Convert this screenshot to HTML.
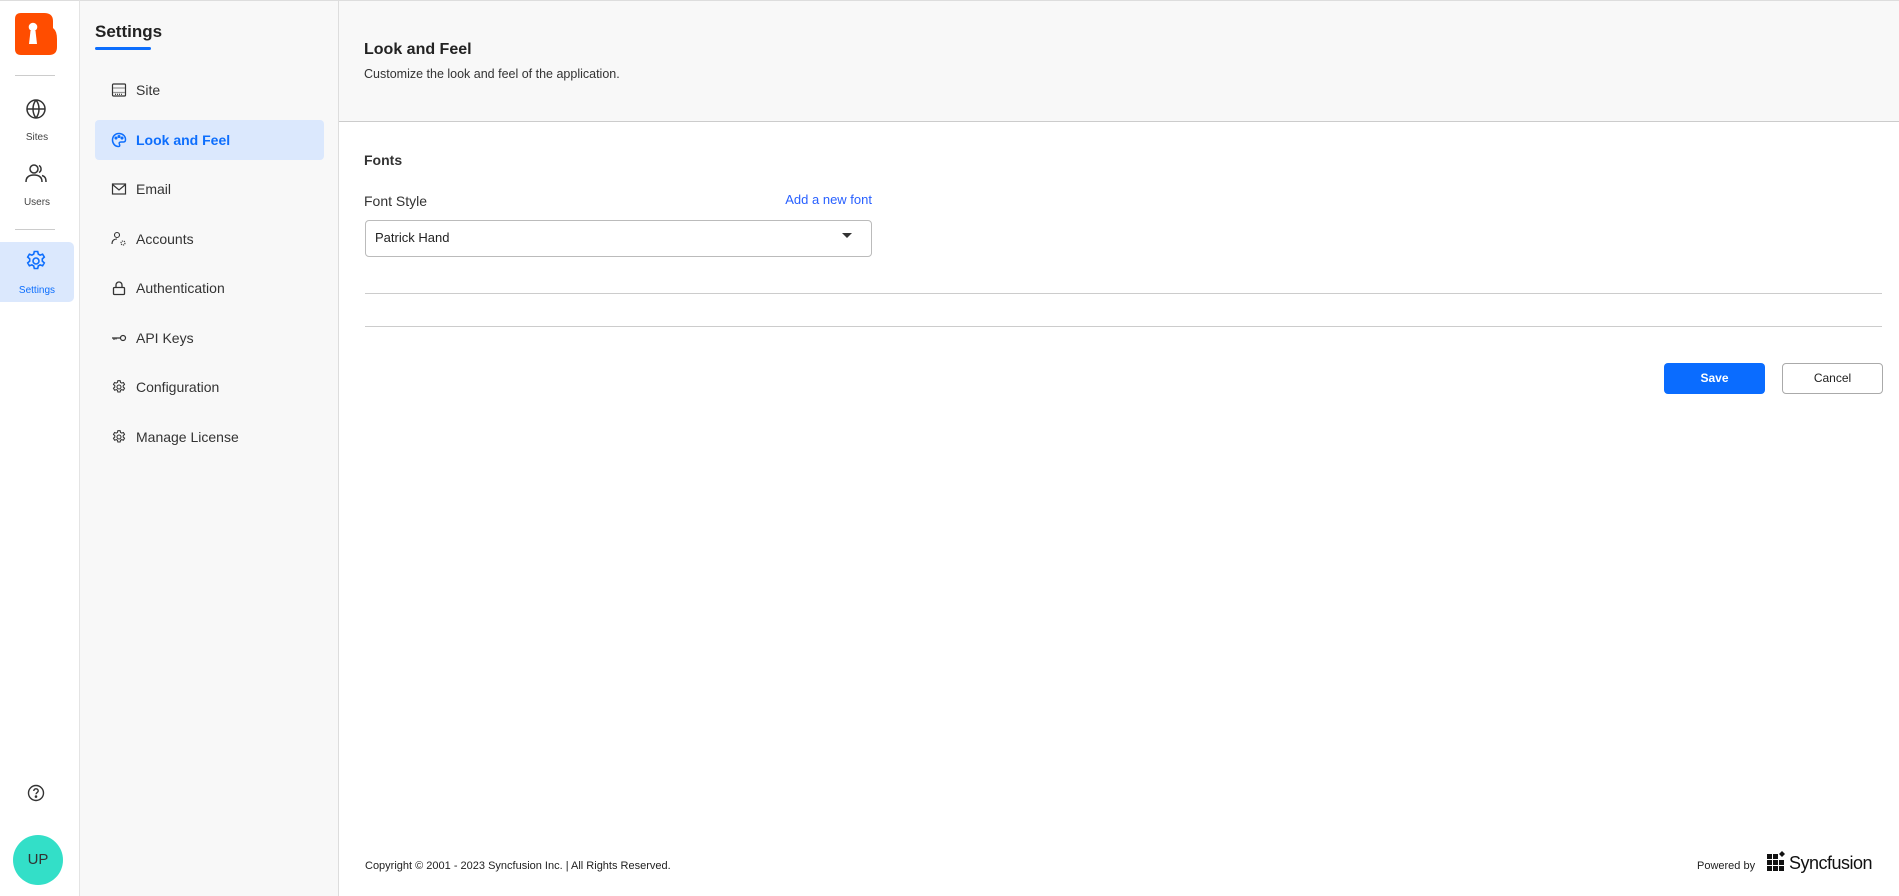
<!DOCTYPE html>
<html><head><meta charset="utf-8"><style>
*{box-sizing:border-box;margin:0;padding:0}
body{width:1899px;height:896px;position:relative;overflow:hidden;background:#fff;font-family:"Liberation Sans Narrow","Liberation Sans",sans-serif;color:#222}
.abs{position:absolute}
.rail{left:0;top:0;width:80px;height:896px;background:#fff;border-right:1px solid #e4e4e4;border-top:1px solid #ddd}
.nav{left:80px;top:0;width:259px;height:896px;background:#f8f8f8;border-right:1px solid #ddd;border-top:1px solid #ddd}
.lbl{font-size:10px;color:#444;width:74px;text-align:center;left:0}
.item{left:95px;width:229px;height:40px;font-size:14px;color:#333;line-height:40px;padding-left:41px;border-radius:4px}
.item svg{position:absolute;left:16px;top:12px}
.t{white-space:nowrap}
</style></head><body>
<div class="abs rail"></div>
<svg class="abs" style="left:15px;top:13px" width="42" height="42" viewBox="0 0 42 42"><path d="M6 0H29Q38 0 38 8V15Q42 18 42 26V34Q42 42 34 42H6Q0 42 0 36V6Q0 0 6 0Z" fill="#ff4d00"/><circle cx="18" cy="14" r="4.3" fill="#fff"/><path d="M15.5 18H20.5L22 31H14Z" fill="#fff"/></svg>
<div class="abs" style="left:15px;top:75px;width:40px;height:1px;background:#ccc"></div>
<svg class="abs" style="left:24px;top:97px" width="24" height="24" viewBox="0 0 24 24" fill="none" stroke="#333" stroke-width="1.5"><circle cx="12" cy="12" r="9"/><path d="M3 12H21M12 3C8 8 8 16 12 21M12 3C16 8 16 16 12 21"/></svg>
<div class="abs lbl t" style="top:132px">Sites</div>
<svg class="abs" style="left:24px;top:162px" width="24" height="24" viewBox="0 0 24 24" fill="none" stroke="#333" stroke-width="1.5"><circle cx="10" cy="7" r="4"/><path d="M2 20C2 15 5 13 10 13S18 15 18 20M15 3.5A4 4 0 0 1 15 10.5M18 13.5C21 14.5 22 16 22 20"/></svg>
<div class="abs lbl t" style="top:197px">Users</div>
<div class="abs" style="left:15px;top:229px;width:40px;height:1px;background:#ccc"></div>
<div class="abs" style="left:0;top:242px;width:74px;height:60px;background:#dbe8fd;border-radius:0 5px 5px 0"></div>
<svg class="abs" style="left:24px;top:249px" width="24" height="24" viewBox="0 0 24 24" fill="none" stroke="#0d6efd" stroke-width="1.6"><circle cx="12" cy="12" r="3"/><path d="M10.3 2.5h3.4l.6 2.6 1.8 1 2.5-.9 1.7 2.9-2 1.8v2.2l2 1.8-1.7 2.9-2.5-.9-1.8 1-.6 2.6h-3.4l-.6-2.6-1.8-1-2.5.9-1.7-2.9 2-1.8v-2.2l-2-1.8 1.7-2.9 2.5.9 1.8-1z"/></svg>
<div class="abs lbl t" style="top:285px;color:#0d6efd">Settings</div>
<svg class="abs" style="left:27px;top:784px" width="18" height="18" viewBox="0 0 18 18" fill="none" stroke="#333" stroke-width="1.4"><circle cx="9" cy="9" r="7.5"/><path d="M6.8 7C6.8 5.5 8 4.8 9 4.8S11.2 5.5 11.2 7C11.2 8.5 9 8.6 9 10.3"/><circle cx="9" cy="12.6" r=".6" fill="#333"/></svg>
<div class="abs" style="left:13px;top:835px;width:50px;height:50px;border-radius:50%;background:#33dfc8;text-align:center;line-height:50px;font-size:15px;color:#333;font-family:'Liberation Sans',sans-serif">UP</div>

<div class="abs nav"></div>
<div class="abs t" style="left:95px;top:22px;font-size:17px;font-weight:bold;color:#222">Settings</div>
<div class="abs" style="left:95px;top:47px;width:56px;height:3px;background:#0d6efd;border-radius:2px"></div>
<div class="abs item t" style="top:70px"><svg width="16" height="16" viewBox="0 0 16 16" fill="none" stroke="#333" stroke-width="1.2"><rect x="1.5" y="2" width="13" height="12" rx="1"/><path d="M1.5 6H14.5M1.5 10.5H14.5M4 12.3H11" stroke-dasharray="1 1"/></svg>Site</div>
<div class="abs item t" style="top:120px;background:#dbe8fd;color:#0d6efd;font-weight:bold"><svg width="16" height="16" viewBox="0 0 16 16" fill="none" stroke="#0d6efd" stroke-width="1.5"><path d="M8 1.5C4 1.5 1.5 4.5 1.5 8S4 14.5 7.5 14.5C9 14.5 9 13 8.3 12S8.5 10 10 10H12.5C14 10 14.5 9 14.5 7.5 14.5 4 11.5 1.5 8 1.5Z"/><circle cx="5" cy="6" r=".8"/><circle cx="8" cy="4.5" r=".8"/><circle cx="11" cy="6" r=".8"/></svg>Look and Feel</div>
<div class="abs item t" style="top:169px"><svg width="16" height="16" viewBox="0 0 16 16" fill="none" stroke="#333" stroke-width="1.2"><rect x="1.5" y="3" width="13" height="10"/><path d="M1.5 3.5L8 9L14.5 3.5"/></svg>Email</div>
<div class="abs item t" style="top:219px"><svg width="16" height="16" viewBox="0 0 16 16" fill="none" stroke="#333" stroke-width="1.1"><circle cx="6" cy="4" r="2.5"/><path d="M1 13C1 9.5 3 8 6 8"/><circle cx="12" cy="12" r="2" stroke-dasharray="1.2 .8"/></svg>Accounts</div>
<div class="abs item t" style="top:268px"><svg width="16" height="16" viewBox="0 0 16 16" fill="none" stroke="#333" stroke-width="1.3"><rect x="2.5" y="7.5" width="11" height="7" rx="1"/><path d="M5 7.5V5A3 3 0 0 1 11 5V7.5"/></svg>Authentication</div>
<div class="abs item t" style="top:318px"><svg width="16" height="16" viewBox="0 0 16 16" fill="none" stroke="#333" stroke-width="1.2"><circle cx="12" cy="8" r="2.5"/><path d="M9.5 8H1M3 8V10M5 8V9.5"/></svg>API Keys</div>
<div class="abs item t" style="top:367px"><svg width="16" height="16" viewBox="0 0 24 24" fill="none" stroke="#333" stroke-width="1.6"><circle cx="12" cy="12" r="3"/><path d="M10.3 2.5h3.4l.6 2.6 1.8 1 2.5-.9 1.7 2.9-2 1.8v2.2l2 1.8-1.7 2.9-2.5-.9-1.8 1-.6 2.6h-3.4l-.6-2.6-1.8-1-2.5.9-1.7-2.9 2-1.8v-2.2l-2-1.8 1.7-2.9 2.5.9 1.8-1z"/></svg>Configuration</div>
<div class="abs item t" style="top:417px"><svg width="16" height="16" viewBox="0 0 24 24" fill="none" stroke="#333" stroke-width="1.6"><circle cx="12" cy="12" r="3"/><path d="M10.3 2.5h3.4l.6 2.6 1.8 1 2.5-.9 1.7 2.9-2 1.8v2.2l2 1.8-1.7 2.9-2.5-.9-1.8 1-.6 2.6h-3.4l-.6-2.6-1.8-1-2.5.9-1.7-2.9 2-1.8v-2.2l-2-1.8 1.7-2.9 2.5.9 1.8-1z"/></svg>Manage License</div>

<div class="abs" style="left:339px;top:0;width:1560px;height:122px;background:#f8f8f8;border-bottom:1px solid #ccc;border-top:1px solid #ddd"></div>
<div class="abs t" style="left:364px;top:41px;font-size:16px;font-weight:bold;color:#222">Look and Feel</div>
<div class="abs t" style="left:364px;top:67px;font-size:12.5px;color:#333">Customize the look and feel of the application.</div>
<div class="abs t" style="left:364px;top:152px;font-size:14px;font-weight:bold;color:#333">Fonts</div>
<div class="abs t" style="left:364px;top:193px;font-size:14px;color:#333">Font Style</div>
<div class="abs t" style="left:700px;width:172px;text-align:right;top:192px;font-size:13px;color:#2860ff">Add a new font</div>
<div class="abs" style="left:365px;top:220px;width:507px;height:37px;border:1px solid #bbb;border-radius:4px;background:#fff"></div>
<div class="abs t" style="left:375px;top:230px;font-size:13px;color:#222">Patrick Hand</div>
<div class="abs" style="left:842px;top:233px;width:0;height:0;border-left:5px solid transparent;border-right:5px solid transparent;border-top:5px solid #333"></div>
<div class="abs" style="left:365px;top:293px;width:1517px;height:1px;background:#ccc"></div>
<div class="abs" style="left:365px;top:326px;width:1517px;height:1px;background:#ccc"></div>
<div class="abs" style="left:1664px;top:363px;width:101px;height:31px;background:#0a6cff;border-radius:4px;color:#fff;font-size:12px;font-weight:bold;text-align:center;line-height:31px">Save</div>
<div class="abs" style="left:1782px;top:363px;width:101px;height:31px;background:#fff;border:1px solid #aaa;border-radius:4px;color:#222;font-size:12px;text-align:center;line-height:29px">Cancel</div>

<div class="abs t" style="left:365px;top:860px;font-size:11px;color:#222">Copyright © 2001 - 2023 Syncfusion Inc. | All Rights Reserved.</div>
<div class="abs t" style="left:1697px;top:860px;font-size:11px;color:#222">Powered by</div>
<svg class="abs" style="left:1767px;top:851px" width="22" height="20" viewBox="0 0 22 20" fill="#111"><rect x="0" y="3" width="5" height="5"/><rect x="6" y="3" width="5" height="5"/><rect x="0" y="9" width="5" height="5"/><rect x="6" y="9" width="5" height="5"/><rect x="12" y="9" width="5" height="5"/><rect x="0" y="15" width="5" height="5"/><rect x="6" y="15" width="5" height="5"/><rect x="12" y="15" width="5" height="5"/><path d="M15 0L18 3L15 6L12 3Z"/></svg>
<div class="abs t" style="left:1789px;top:853px;font-size:18px;font-family:'Liberation Sans',sans-serif;color:#111;letter-spacing:-0.5px">Syncfusion</div>
</body></html>
